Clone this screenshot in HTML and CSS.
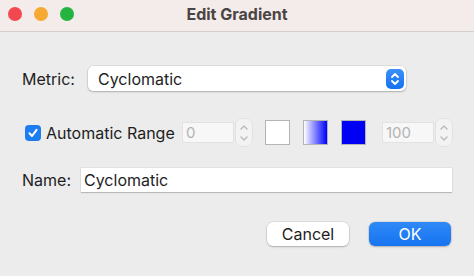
FILE: index.html
```html
<!DOCTYPE html>
<html lang="en">
<head>
    <meta charset="UTF-8">
    <title>Edit Gradient</title>
    <link rel="stylesheet" href="styles.css">
</head>
<body>
    <div class="window">
        <div class="titlebar">
            <div class="lights">
                <span class="light red"></span>
                <span class="light yellow"></span>
                <span class="light green"></span>
            </div>
            <div class="title">Edit Gradient</div>
        </div>

        <div class="content">
            <div class="row metric-row">
                <span class="label">Metric:</span>
                <div class="popup">
                    <span>Cyclomatic</span>
                    <span class="popup-arrows">
                        <svg width="10" height="14" viewBox="0 0 10 14">
                            <path d="M2 5 L5 2 L8 5 M2 9 L5 12 L8 9" fill="none" stroke="#fff" stroke-width="1.8" stroke-linecap="round" stroke-linejoin="round"/>
                        </svg>
                    </span>
                </div>
            </div>

            <div class="row range-row">
                <span class="checkbox">
                    <svg width="12" height="12" viewBox="0 0 12 12">
                        <path d="M2.5 6.3 L5 9 L9.6 2.8" fill="none" stroke="#fff" stroke-width="2" stroke-linecap="round" stroke-linejoin="round"/>
                    </svg>
                </span>
                <span class="label auto-label">Automatic Range</span>
                <div class="number">
                    <span class="field">0</span>
                    <span class="stepper">
                        <svg width="10" height="24" viewBox="0 0 10 24">
                            <path d="M2 8 L5 5 L8 8 M2 16 L5 19 L8 16" fill="none" stroke="#b9b9b9" stroke-width="1.4" stroke-linecap="round" stroke-linejoin="round"/>
                        </svg>
                    </span>
                </div>
                <span class="swatch white"></span>
                <span class="swatch gradient"></span>
                <span class="swatch blue"></span>
                <div class="number">
                    <span class="field">100</span>
                    <span class="stepper">
                        <svg width="10" height="24" viewBox="0 0 10 24">
                            <path d="M2 8 L5 5 L8 8 M2 16 L5 19 L8 16" fill="none" stroke="#b9b9b9" stroke-width="1.4" stroke-linecap="round" stroke-linejoin="round"/>
                        </svg>
                    </span>
                </div>
            </div>

            <div class="row name-row">
                <span class="label">Name:</span>
                <div class="text-input">Cyclomatic</div>
            </div>

            <div class="buttons">
                <button class="btn">Cancel</button>
                <button class="btn primary">OK</button>
            </div>
        </div>
    </div>
</body>
</html>
```

FILE: styles.css
```css
body {
    margin: 0;
    font-family: Inter, 'Liberation Sans', Arial, sans-serif;
    color: #1e1e1e;
    background-color: #ececec;
}
.window {
    width: 474px;
    height: 276px;
    background-color: #ececec;
}
.titlebar {
    height: 31px;
    background-color: #f3ecea;
    border-bottom: 1px solid #d3cecc;
    position: relative;
    display: flex;
    justify-content: center;
    align-items: center;
}
.lights {
    position: absolute;
    left: 8px;
    top: 7px;
    display: flex;
    gap: 12px;
}
.light {
    width: 14px;
    height: 14px;
    border-radius: 50%;
}
.red { background-color: #f2484f; }
.yellow { background-color: #f6aa33; }
.green { background-color: #25b440; }
.title {
    font-size: 16px;
    font-weight: bold;
    color: #4b4444;
    margin-top: -3px;
}

.content {
    padding: 34px 22px 0 22px;
}
.row {
    display: flex;
    align-items: center;
}
.label {
    font-size: 16px;
}

/* metric */
.metric-row .label {
    width: 66px;
}
.popup {
    width: 318px;
    height: 25px;
    box-sizing: border-box;
    background-color: #fff;
    border-radius: 5px;
    box-shadow: 0 0 0 0.5px rgba(0,0,0,0.12), 0 1px 2px rgba(0,0,0,0.22);
    display: flex;
    align-items: center;
    justify-content: space-between;
    padding: 0 2px 0 10px;
    font-size: 16px;
}
.popup-arrows {
    width: 18px;
    height: 20px;
    border-radius: 5px;
    background: linear-gradient(#3b8ff8, #1473f0);
    display: flex;
    justify-content: center;
    align-items: center;
}

/* range */
.range-row {
    margin-top: 29px;
    height: 25px;
}
.checkbox {
    width: 16px;
    height: 16px;
    margin-left: 3px;
    border-radius: 4px;
    background-color: #1d7cf2;
    display: flex;
    justify-content: center;
    align-items: center;
}
.auto-label {
    margin-left: 5px;
    width: 136px;
}
.number {
    display: flex;
    align-items: center;
}
.field {
    width: 52px;
    height: 21px;
    box-sizing: border-box;
    background-color: #f7f7f7;
    border: 1px solid #e2e2e2;
    color: #b3b3b3;
    font-size: 15px;
    line-height: 19px;
    padding-left: 3px;
}
.stepper {
    width: 16px;
    height: 27px;
    margin-left: 2px;
    border-radius: 6px;
    background-color: #f3f3f3;
    box-shadow: 0 0 0 0.5px rgba(0,0,0,0.08);
    display: flex;
    justify-content: center;
    align-items: center;
}
.swatch {
    width: 25px;
    height: 25px;
    box-sizing: border-box;
    border: 1px solid #b4b4b4;
    margin-left: 13px;
}
.swatch.white {
    background-color: #fff;
}
.swatch.gradient {
    background: linear-gradient(to right, #ffffff, #0000ff);
}
.swatch.blue {
    background-color: #0000f5;
}
.range-row .swatch + .number {
    margin-left: 16px;
}

/* name */
.name-row {
    margin-top: 23px;
}
.name-row .label {
    width: 59px;
}
.text-input {
    width: 371px;
    height: 24px;
    box-sizing: border-box;
    background-color: #fff;
    box-shadow: 0 0 0 0.5px rgba(0,0,0,0.08), 0 1px 1px rgba(0,0,0,0.18);
    font-size: 16px;
    line-height: 24px;
    padding-left: 3px;
}

/* buttons */
.buttons {
    margin-top: 30px;
    display: flex;
    justify-content: flex-end;
    gap: 20px;
    padding-right: 1px;
}
.btn {
    width: 82px;
    height: 24px;
    border: none;
    border-radius: 6px;
    background-color: #fff;
    box-shadow: 0 0 0 0.5px rgba(0,0,0,0.12), 0 1px 2px rgba(0,0,0,0.22);
    font-family: Inter, 'Liberation Sans', Arial, sans-serif;
    font-size: 16px;
    color: #1e1e1e;
    padding: 0;
}
.btn.primary {
    background: linear-gradient(#2f89f7, #1574ef);
    color: #fff;
}
```
